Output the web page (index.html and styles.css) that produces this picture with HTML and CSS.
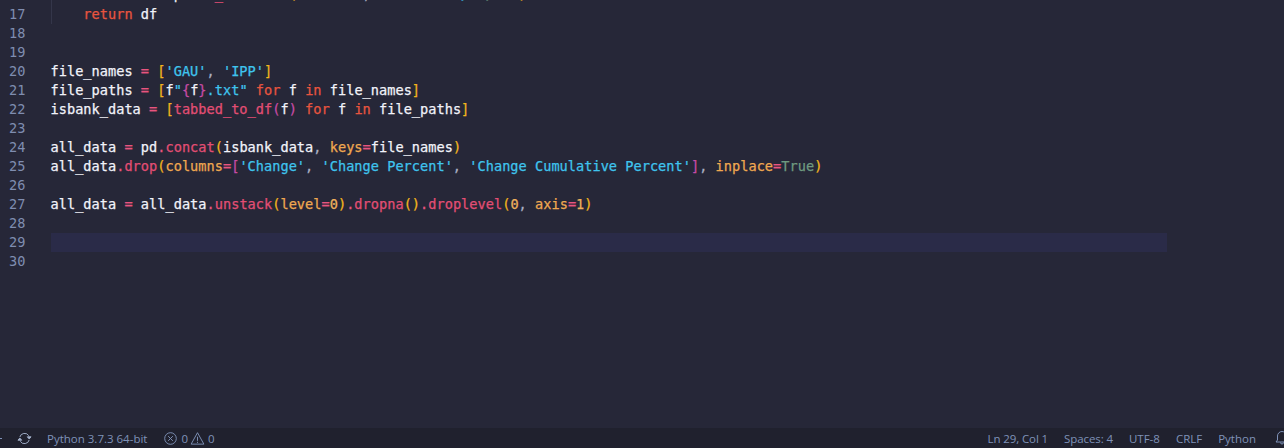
FILE: index.html
```html
<!DOCTYPE html>
<html lang="en">
<head>
<meta charset="utf-8">
<title>analysis.py</title>
<link rel="stylesheet" href="styles.css">
</head>
<body>
<main class="editor">
  <div class="code">
    <div class="line first"><span class="num">16</span><span class="txt"><span class="guide"></span>    <span class="w">df</span><span class="o">.</span><span class="w">index</span> <span class="o">=</span> <span class="w">pd</span><span class="o">.</span><span class="p">to_datetime</span><span class="y">(</span><span class="w">df</span><span class="o">.</span><span class="w">index</span><span class="c">,</span> <span class="a">format</span><span class="o">=</span><span class="s">'%d/%m</span><span class="g">/</span><span class="s">%Y'</span><span class="y">)</span></span></div>
    <div class="line"><span class="num">17</span><span class="txt"><span class="guide"></span>    <span class="k">return</span> <span class="w">df</span></span></div>
    <div class="line"><span class="num">18</span><span class="txt"></span></div>
    <div class="line"><span class="num">19</span><span class="txt"></span></div>
    <div class="line"><span class="num">20</span><span class="txt"><span class="w">file_names</span> <span class="o">=</span> <span class="y">[</span><span class="s">'GAU'</span><span class="c">,</span> <span class="s">'IPP'</span><span class="y">]</span></span></div>
    <div class="line"><span class="num">21</span><span class="txt"><span class="w">file_paths</span> <span class="o">=</span> <span class="y">[</span><span class="w">f</span><span class="s">"</span><span class="m">{</span><span class="w">f</span><span class="m">}</span><span class="s">.txt"</span> <span class="k">for</span> <span class="w">f</span> <span class="k">in</span> <span class="w">file_names</span><span class="y">]</span></span></div>
    <div class="line"><span class="num">22</span><span class="txt"><span class="w">isbank_data</span> <span class="o">=</span> <span class="y">[</span><span class="p">tabbed_to_df</span><span class="m">(</span><span class="w">f</span><span class="m">)</span> <span class="k">for</span> <span class="w">f</span> <span class="k">in</span> <span class="w">file_paths</span><span class="y">]</span></span></div>
    <div class="line"><span class="num">23</span><span class="txt"></span></div>
    <div class="line"><span class="num">24</span><span class="txt"><span class="w">all_data</span> <span class="o">=</span> <span class="w">pd</span><span class="o">.</span><span class="p">concat</span><span class="y">(</span><span class="w">isbank_data</span><span class="c">,</span> <span class="a">keys</span><span class="o">=</span><span class="w">file_names</span><span class="y">)</span></span></div>
    <div class="line"><span class="num">25</span><span class="txt"><span class="w">all_data</span><span class="o">.</span><span class="p">drop</span><span class="y">(</span><span class="a">columns</span><span class="o">=</span><span class="m">[</span><span class="s">'Change'</span><span class="c">,</span> <span class="s">'Change Percent'</span><span class="c">,</span> <span class="s">'Change Cumulative Percent'</span><span class="m">]</span><span class="c">,</span> <span class="a">inplace</span><span class="o">=</span><span class="g">True</span><span class="y">)</span></span></div>
    <div class="line"><span class="num">26</span><span class="txt"></span></div>
    <div class="line"><span class="num">27</span><span class="txt"><span class="w">all_data</span> <span class="o">=</span> <span class="w">all_data</span><span class="o">.</span><span class="p">unstack</span><span class="y">(</span><span class="a">level</span><span class="o">=</span><span class="n">0</span><span class="y">)</span><span class="o">.</span><span class="p">dropna</span><span class="y">()</span><span class="o">.</span><span class="p">droplevel</span><span class="y">(</span><span class="n">0</span><span class="c">,</span> <span class="a">axis</span><span class="o">=</span><span class="n">1</span><span class="y">)</span></span></div>
    <div class="line"><span class="num">28</span><span class="txt"></span></div>
    <div class="line"><span class="num">29</span><span class="txt current"></span></div>
    <div class="line"><span class="num">30</span><span class="txt"></span></div>
  </div>
</main>
<footer class="status">
  <div class="group">
    <span class="edge"></span>
    <svg class="sync" viewBox="0 0 16 16" width="15" height="15" fill="none" stroke="currentColor" stroke-width="1"><path d="M3 6.500A5.200 5.200 0 0 1 12.500 5"/><path d="M11 6.200H15L13 8.500Z" fill="currentColor"/><path d="M13 9.500A5.200 5.200 0 0 1 3.500 11"/><path d="M1 9.800H5L3 7.500Z" fill="currentColor"/></svg>
    <span class="item">Python 3.7.3 64-bit</span>
    <span class="item problems">
      <svg viewBox="0 0 16 16" width="15" height="15" fill="none" stroke="currentColor"><circle cx="8" cy="8" r="6.200"/><path d="M5.500 5.500l5 5M10.500 5.500l-5 5"/></svg>
      <span>0</span>
      <svg class="warn" viewBox="0 0 16 16" width="15" height="15" fill="none" stroke="currentColor"><path d="M8 1.800L14.800 14H1.200Z"/><path d="M8 6v4.500M8 11.500v1.200"/></svg>
      <span>0</span>
    </span>
  </div>
  <div class="group right">
    <span class="tight">Ln 29, Col 1</span>
    <span class="tight">Spaces: 4</span>
    <span>UTF-8</span>
    <span>CRLF</span>
    <span>Python</span>
    <svg class="bell" viewBox="0 0 16 16" width="16" height="16" fill="none" stroke="currentColor"><path d="M8 1.500a4.500 4.500 0 0 0-4.500 4.500v4L2 12h12l-1.500-2V6A4.500 4.500 0 0 0 8 1.500Z"/><path d="M6.500 12.500a1.500 1.500 0 0 0 3 0"/></svg>
  </div>
</footer>
</body>
</html>
```
FILE: styles.css
```css
* { box-sizing: border-box; }
html, body { margin: 0; height: 100%; }
body {
  width: 1284px;
  height: 448px;
  overflow: hidden;
  display: flex;
  flex-direction: column;
  background: #262738;
}
.editor { flex: 1; min-height: 0; overflow: hidden; }
.code {
  margin-top: -15px;
  font: 13.6px/19px "DejaVu Sans Mono", monospace;
  letter-spacing: 0.025px;
  color: #e6e6f0;
}
.line { display: flex; height: 19px; }
.first { height: 20px; }
.num { width: 51px; padding-left: 9px; color: #7f8db0; flex: none; letter-spacing: 0; }
.txt {
  position: relative;
  width: 1116px;
  white-space: pre;
  text-indent: -0.5px;
  -webkit-text-stroke: 0.25px;
}
.current { background: #2a2b48; }
.guide { position: absolute; left: 0; top: 0; bottom: 0; border-left: 1px solid #34364a; }
.w { color: #f2f3fa; }
.k { color: #e8553f; }
.o { color: #e8557f; }
.s { color: #3fc4ee; }
.y { color: #f2b51c; }
.m { color: #c74ba6; }
.p { color: #e34e74; }
.a { color: #f0a850; }
.n { color: #eeb05c; }
.g { color: #6f9a80; }
.c { color: #aab0c4; }
.status {
  flex: none;
  height: 20px;
  display: flex;
  justify-content: space-between;
  align-items: center;
  overflow: hidden;
  background: #20212e;
  color: #7f92b8;
  font: 11.5px "Open Sans", sans-serif;
}
.group { display: flex; align-items: center; }
.edge { width: 2px; height: 1px; margin-right: 15px; background: #7f92b8; }
.sync { margin-right: 15px; color: #a4b2cc; }
.problems { display: flex; align-items: center; gap: 3px; margin-left: 16px; }
.warn { margin-left: -1px; }
.right { gap: 16px; }
.tight { letter-spacing: -0.1px; }
.bell { margin: 0 -6px 0 2px; }
```
